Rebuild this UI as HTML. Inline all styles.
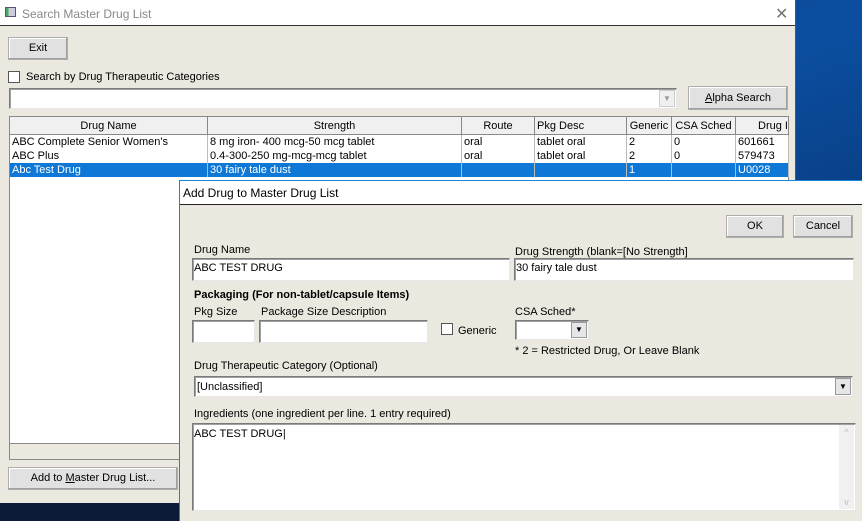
<!DOCTYPE html>
<html><head><style>
*{box-sizing:border-box;margin:0;padding:0}
body{width:862px;height:521px;position:relative;overflow:hidden;font-family:"Liberation Sans",Arial,sans-serif;font-size:11px;color:#000;background:linear-gradient(160deg,#0a3f86 0%,#0b4ea0 40%,#083a7c 70%,#06285a 100%)}
.a{position:absolute}
.btn{position:absolute;background:#e1e1e1;border:1px solid #adadad;box-shadow:inset -1px -1px 0 #a0a0a0,inset 1px 1px 0 #fff;text-align:center;font-size:11px}
.inp{position:absolute;background:#fff;border:1px solid #7a7a7a;border-right-color:#e6e6e6;border-bottom-color:#e6e6e6;box-shadow:inset 1px 1px 0 #a0a0a0}
.cb{position:absolute;width:12px;height:12px;background:#fff;border:1px solid #555}
.hd{position:absolute;top:0;height:18px;background:#f0f0f0;border-right:1px solid #888;border-bottom:1px solid #888;text-align:center;line-height:19px}
.row{position:absolute;left:0;width:779px;height:14px;line-height:15px}
.row span{position:absolute;top:0;padding-left:2px;height:14px;border-right:1px solid #bbb;white-space:nowrap;overflow:hidden}
.arr{position:absolute;background:#e6e6e6;border:1px solid #999;font-size:8px;text-align:center}
</style></head><body>
<div class="a" style="left:0;top:503px;width:180px;height:18px;background:#0b1a36"></div>
<div class="a" style="left:0;top:0;width:796px;height:503px;background:#ebe8df;border-right:1px solid #555">
 <div class="a" style="left:0;top:0;width:795px;height:26px;background:#fff;border-bottom:1px solid #333"></div>
 <div class="a" style="left:5px;top:7px;width:11px;height:10px;border:1px solid #557;background:linear-gradient(90deg,#4a6 0 30%,#ccd 30%)"></div>
 <div class="a" style="left:22px;top:7px;color:#888;font-size:12px">Search Master Drug List</div>
 <div class="a" style="left:775px;top:4px;color:#777;font-size:16px;font-weight:100">✕</div>
 <div class="btn" style="left:8px;top:37px;width:60px;height:23px;line-height:21px">Exit</div>
 <div class="cb" style="left:8px;top:71px"></div>
 <div class="a" style="left:26px;top:71px">Search by Drug Therapeutic Categories</div>
 <div class="inp" style="left:9px;top:88px;width:668px;height:21px"></div>
 <div class="arr" style="left:659px;top:90px;width:16px;height:17px;color:#999;line-height:15px;background:#f0f0f0;border-color:#ccc">▼</div>
 <div class="btn" style="left:688px;top:86px;width:100px;height:24px;line-height:22px"><u>A</u>lpha Search</div>
 <div class="a" style="left:9px;top:116px;width:780px;height:344px;background:#fff;border:1px solid #888">
  <div class="hd" style="left:0;width:198px">Drug Name</div>
  <div class="hd" style="left:198px;width:254px">Strength</div>
  <div class="hd" style="left:452px;width:73px">Route</div>
  <div class="hd" style="left:525px;width:92px;text-align:left;padding-left:2px">Pkg Desc</div>
  <div class="hd" style="left:617px;width:45px">Generic</div>
  <div class="hd" style="left:662px;width:64px">CSA Sched</div>
  <div class="hd" style="left:726px;width:53px;text-align:right;overflow:hidden;white-space:nowrap">Drug I</div>
  <div class="row" style="top:18px"><span style="left:0;width:198px">ABC Complete Senior Women's</span><span style="left:198px;width:254px">8 mg iron- 400 mcg-50 mcg tablet</span><span style="left:452px;width:73px">oral</span><span style="left:525px;width:92px">tablet oral</span><span style="left:617px;width:45px">2</span><span style="left:662px;width:64px">0</span><span style="left:726px;width:53px">601661</span></div>
  <div class="row" style="top:32px"><span style="left:0;width:198px">ABC Plus</span><span style="left:198px;width:254px">0.4-300-250 mg-mcg-mcg tablet</span><span style="left:452px;width:73px">oral</span><span style="left:525px;width:92px">tablet oral</span><span style="left:617px;width:45px">2</span><span style="left:662px;width:64px">0</span><span style="left:726px;width:53px">579473</span></div>
  <div class="row" style="top:46px;background:#0f78d7;color:#fff"><span style="left:0;width:198px">Abc Test Drug</span><span style="left:198px;width:254px">30 fairy tale dust</span><span style="left:452px;width:73px"></span><span style="left:525px;width:92px"></span><span style="left:617px;width:45px">1</span><span style="left:662px;width:64px"></span><span style="left:726px;width:53px">U0028</span></div>
  <div class="a" style="left:0;top:326px;width:778px;height:16px;background:#ebe8df;border-top:1px solid #888"></div>
 </div>
 <div class="btn" style="left:8px;top:467px;width:170px;height:23px;line-height:21px">Add to <u>M</u>aster Drug List...</div>
</div>
<div class="a" style="left:179px;top:180px;width:683px;height:341px;background:#ebe8df;border-left:1px solid #1883d7;border-top:1px solid #1883d7">
 <div class="a" style="left:0;top:0;width:683px;height:24px;background:#fff;border-bottom:1px solid #222"></div>
 <div class="a" style="left:3px;top:5px;font-size:12px">Add Drug to Master Drug List</div>
</div>
<div class="btn" style="left:726px;top:215px;width:58px;height:23px;line-height:21px">OK</div>
<div class="btn" style="left:793px;top:215px;width:60px;height:23px;line-height:21px">Cancel</div>
<div class="a" style="left:194px;top:244px">Drug Name</div>
<div class="inp" style="left:192px;top:258px;width:318px;height:23px;padding:3px 1px">ABC TEST DRUG</div>
<div class="a" style="left:515px;top:246px">Drug Strength (blank=[No Strength]</div>
<div class="inp" style="left:514px;top:258px;width:340px;height:23px;padding:3px 1px">30 fairy tale dust</div>
<div class="a" style="left:194px;top:289px;font-weight:bold">Packaging (For non-tablet/capsule Items)</div>
<div class="a" style="left:194px;top:306px">Pkg Size</div>
<div class="inp" style="left:192px;top:320px;width:63px;height:23px"></div>
<div class="a" style="left:261px;top:306px">Package Size Description</div>
<div class="inp" style="left:259px;top:320px;width:169px;height:23px"></div>
<div class="cb" style="left:441px;top:323px"></div>
<div class="a" style="left:458px;top:325px">Generic</div>
<div class="a" style="left:515px;top:306px">CSA Sched*</div>
<div class="inp" style="left:515px;top:320px;width:74px;height:20px"></div>
<div class="arr" style="left:571px;top:322px;width:16px;height:16px;line-height:14px">▼</div>
<div class="a" style="left:515px;top:345px">* 2 = Restricted Drug, Or Leave Blank</div>
<div class="a" style="left:194px;top:360px">Drug Therapeutic Category (Optional)</div>
<div class="inp" style="left:194px;top:376px;width:659px;height:21px;padding:4px 2px">[Unclassified]</div>
<div class="arr" style="left:835px;top:378px;width:16px;height:17px;line-height:15px">▼</div>
<div class="a" style="left:194px;top:408px">Ingredients (one ingredient per line. 1 entry required)</div>
<div class="inp" style="left:192px;top:423px;width:664px;height:88px;padding:4px 1px">ABC TEST DRUG|</div>
<div class="a" style="left:839px;top:425px;width:15px;height:84px;background:#f0f0f0;color:#bbb;font-size:9px;text-align:center"><div style="margin-top:2px">^</div><div style="margin-top:60px">v</div></div>
</body></html>
